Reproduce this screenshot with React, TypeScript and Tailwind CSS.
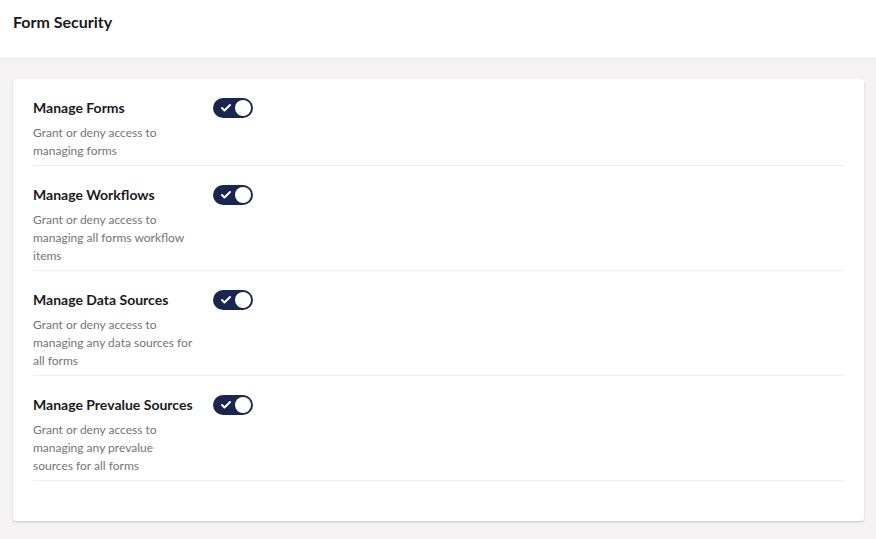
import { Check } from "lucide-react";

interface Permission {
  name: string;
  description: string;
  enabled: boolean;
}

const permissions: Permission[] = [
  { name: "Manage Forms", description: "Grant or deny access to managing forms", enabled: true },
  { name: "Manage Workflows", description: "Grant or deny access to managing all forms workflow items", enabled: true },
  { name: "Manage Data Sources", description: "Grant or deny access to managing any data sources for all forms", enabled: true },
  { name: "Manage Prevalue Sources", description: "Grant or deny access to managing any prevalue sources for all forms", enabled: true },
];

function Toggle({ on }: { on: boolean }) {
  return (
    <button
      className={`relative flex h-[20px] w-[40px] shrink-0 items-center rounded-full ${on ? "bg-[#1b264f]" : "bg-[#d8d7d9]"}`}
    >
      {on && <Check className="absolute left-[7px] top-[4px] h-[12px] w-[12px] text-white" strokeWidth={4} />}
      <span className={`absolute top-[2px] h-[16px] w-[16px] rounded-full bg-white ${on ? "left-[22px]" : "left-[2px]"}`} />
    </button>
  );
}

export default function App() {
  return (
    <div className="min-h-screen bg-[#f4f2f2] font-['Lato',sans-serif]">
      <div className="h-[59px] border-b border-[#e6e5e5] bg-white px-[13px] pt-[11px]">
        <h1 className="text-[16px] leading-[22px] font-bold text-[#1a1a1a]">Form Security</h1>
      </div>
      <div className="pl-[13px] pr-[12px] pt-[20px]">
        <div className="rounded-[3px] bg-white pl-[20px] pr-[20px] pb-[40px] shadow-[0_1px_2px_rgba(0,0,0,0.2)]">
          {permissions.map((p) => (
            <div key={p.name} className="flex gap-[20px] border-b border-[#efeeee] pt-[19px] pb-[5px]">
              <div className="w-[160px]">
                <div className="text-[14px] leading-[20px] font-bold text-[#1a1a1a]">{p.name}</div>
                <div className="mt-[6px] text-[12px] leading-[18px] text-[#747474]">{p.description}</div>
              </div>
              <Toggle on={p.enabled} />
            </div>
          ))}
        </div>
      </div>
    </div>
  );
}
